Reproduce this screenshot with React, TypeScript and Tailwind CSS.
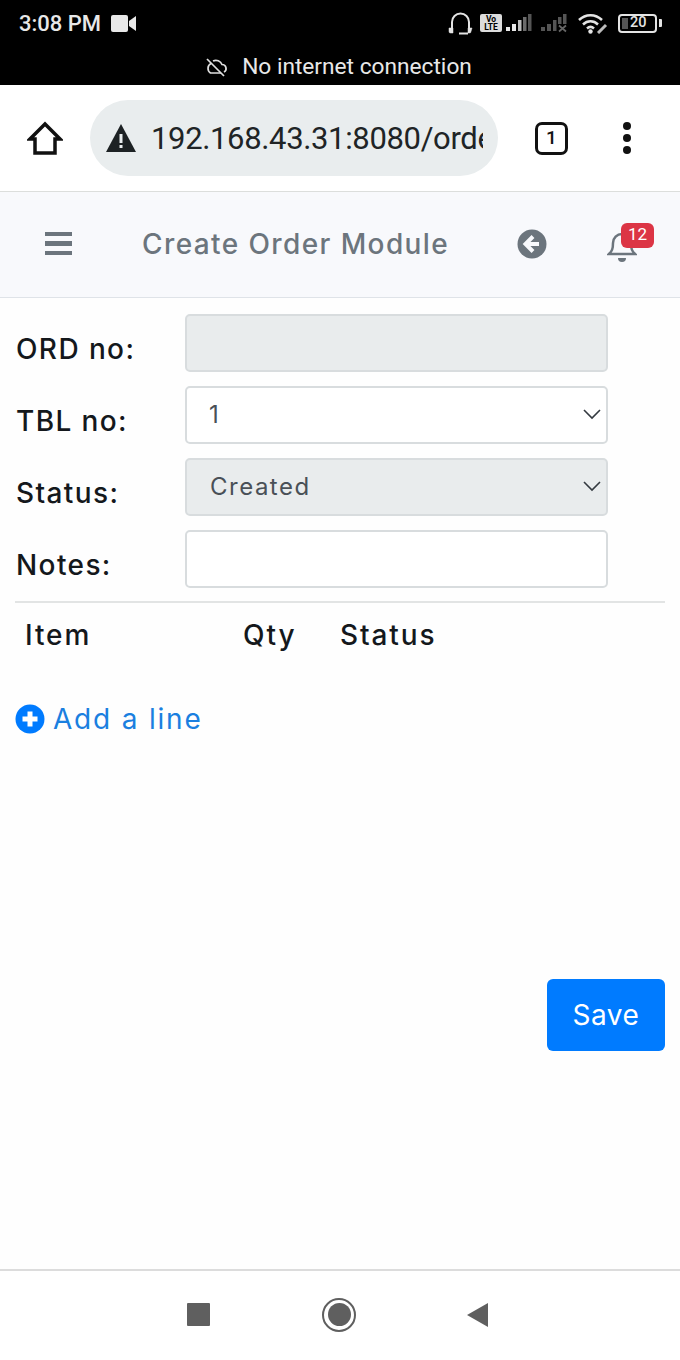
import { useState } from "react";

const sans = "font-['Inter','Liberation_Sans',sans-serif]";

function StatusIcons() {
  return (
    <div className="flex items-center text-[#e4e4e4]">
      {/* headset */}
      <svg width="25" height="23" viewBox="0 0 25 23" fill="none" stroke="currentColor">
        <path d="M4 17V10a8.500 8.500 0 0 1 17 0v7" strokeWidth="2" />
        <path d="M1 16h4v5H2.500A1.500 1.500 0 0 1 1 19.500zM24 16h-4v5h1.500a1.500 1.500 0 0 0 1.500-1.500z" fill="currentColor" strokeWidth="0.500" />
        <path d="M11 21.500h9" strokeWidth="2" />
      </svg>
      <div className="ml-[7px] flex h-[18px] w-[22px] flex-col items-center justify-center rounded-[2px] bg-[#dcdcdc] font-['Roboto',sans-serif] text-[8.500px] leading-[8.500px] font-bold text-black">
        <span>Vo</span>
        <span>LTE</span>
      </div>
      {/* first sim */}
      <svg width="26" height="20" viewBox="0 0 26 20" className="ml-[4px]">
        <rect x="0" y="14" width="4" height="4" fill="#e8e8e8" />
        <rect x="6" y="11" width="4" height="7" fill="#e8e8e8" />
        <rect x="12" y="7" width="3.500" height="11" fill="#bdbdbd" />
        <rect x="17" y="4" width="3.500" height="14" fill="#6b6b6b" />
        <rect x="22" y="1" width="3.500" height="17" fill="#555555" />
      </svg>
      {/* second sim */}
      <svg width="26" height="20" viewBox="0 0 26 20" className="ml-[9px]">
        <rect x="0" y="14" width="4" height="4" fill="#555555" />
        <rect x="6" y="11" width="4" height="7" fill="#555555" />
        <rect x="12" y="7" width="3.500" height="11" fill="#555555" />
        <rect x="17" y="4" width="3.500" height="7" fill="#555555" />
        <rect x="22" y="1" width="3.500" height="10" fill="#555555" />
        <path d="M18 12.500l7 6M25 12.500l-7 6" stroke="#666666" strokeWidth="1.700" />
      </svg>
      {/* wifi */}
      <svg width="30" height="21" viewBox="0 0 30 21" fill="none" stroke="currentColor" strokeWidth="2.500" className="ml-[11px]">
        <path d="M1 7C7.500 .5 17.500 .5 24 7" />
        <path d="M5 11.500c4.500-4.200 10.500-4.200 15 0" />
        <path d="M9 15.500c2.200-2 4.800-2 7 0" />
        <circle cx="12.500" cy="18.500" r="2.200" fill="currentColor" stroke="none" />
        <path d="M20 20l8-8" strokeWidth="3" stroke="#bdbdbd" />
      </svg>
      {/* battery */}
      <div className="ml-[10px] flex h-[19px] w-[39px] items-center rounded-[4px] border-2 border-[#e4e4e4] pl-[2px] font-['Roboto',sans-serif] text-[14.500px] leading-none font-medium">
        <span className="h-[11px] w-[6px] bg-[#555555]" />
        <span className="ml-[2px]">20</span>
      </div>
      <div className="ml-[2px] h-[8px] w-[3px] rounded-r-[1px] bg-[#e4e4e4]" />
    </div>
  );
}

function Chevron() {
  return (
    <svg width="18" height="11" viewBox="0 0 18 11" fill="none" stroke="#343a40" strokeWidth="1.600" className="pointer-events-none absolute top-[23px] right-[7px]">
      <path d="M1 1l8 8 8-8" />
    </svg>
  );
}

function FormRow({ label, children }: { label: string; children: React.ReactNode }) {
  return (
    <div className="flex h-[58px] items-stretch">
      <label className="flex w-[170px] items-center pt-[12px] pl-[1px] text-[28px] leading-none font-medium tracking-[1.400px] text-[#14181c]">
        {label}
      </label>
      <div className="relative w-[423px]">{children}</div>
    </div>
  );
}

export default function App() {
  const [tbl, setTbl] = useState("1");
  const [notes, setNotes] = useState("");

  return (
    <div className={`flex h-[1360px] w-[680px] flex-col overflow-hidden bg-[#fefefe] ${sans}`}>
      {/* android status bar */}
      <div className="h-[85px] shrink-0 bg-black font-['Roboto',sans-serif] text-[#e8e8e8]">
        <div className="flex h-[46px] items-center justify-between pr-[18px] pl-[19px]">
          <div className="flex items-center">
            <span className="text-[22px] font-medium">3:08 PM</span>
            <svg width="25" height="17" viewBox="0 0 25 17" className="ml-[10px]" fill="#e8e8e8">
              <rect x="0" y="0" width="17" height="17" rx="2" />
              <path d="M18 6l7-5v15l-7-5z" />
            </svg>
          </div>
          <StatusIcons />
        </div>
        <div className="flex h-[39px] items-center justify-center pt-[3px]">
          <svg width="24" height="20" viewBox="0 0 24 20" fill="none" stroke="#e0e0e0" strokeWidth="1.700" className="-ml-[4px]">
            <path d="M7 6.500A5.500 5.500 0 0 0 6.500 16H17M20 15a4 4 0 0 0-2-7.500A6.500 6.500 0 0 0 9 4" />
            <path d="M3 2l17 17" />
          </svg>
          <span className="ml-[14px] text-[22.700px]">No internet connection</span>
        </div>
      </div>

      {/* browser toolbar */}
      <div className="flex h-[107px] shrink-0 items-center border-b border-[#dcdedc] bg-white">
        <svg width="36" height="36" viewBox="0 0 36 36" fill="none" stroke="#111111" strokeWidth="3.500" className="ml-[27px]">
          <path d="M18 4L3 19h5v14h20V19h5z" />
        </svg>
        <div className="ml-[27px] flex h-[76px] w-[408px] items-center overflow-hidden rounded-full bg-[#e9edee] pl-[15px]">
          <svg width="32" height="30" viewBox="0 0 32 30" className="shrink-0">
            <path d="M16 1L31 29H1z" fill="#1d2224" />
            <rect x="14.500" y="11" width="3" height="9" fill="#e9edee" />
            <rect x="14.500" y="22" width="3" height="3" fill="#e9edee" />
          </svg>
          <div className="ml-[14px] w-[332px] overflow-hidden font-['Roboto',sans-serif] text-[31px] leading-none tracking-[-0.350px] whitespace-nowrap text-[#202426]">
            192.168.43.31:8080/order
          </div>
        </div>
        <div className="ml-[37px] flex h-[33px] w-[33px] items-center justify-center rounded-[7px] border-[3px] border-[#111111] font-['Roboto',sans-serif] text-[19px] font-medium text-[#111111]">
          1
        </div>
        <div className="ml-[55px] flex flex-col gap-[4px]">
          <span className="h-[8px] w-[8px] rounded-full bg-[#111111]" />
          <span className="h-[8px] w-[8px] rounded-full bg-[#111111]" />
          <span className="h-[8px] w-[8px] rounded-full bg-[#111111]" />
        </div>
      </div>

      {/* navbar */}
      <div className="flex h-[106px] shrink-0 items-center border-b border-[#dfe3e8] bg-[#f8f9fc] pb-[2px]">
        <div className="ml-[45px] flex w-[27px] flex-col gap-[5px]">
          <span className="h-[4.500px] bg-[#6c757d]" />
          <span className="h-[4.500px] bg-[#6c757d]" />
          <span className="h-[4.500px] bg-[#6c757d]" />
        </div>
        <h1 className="ml-[70px] w-[375px] text-[28px] leading-none font-medium tracking-[1.400px] whitespace-nowrap text-[#6c757d]">
          Create Order Module
        </h1>
        <svg width="30" height="30" viewBox="0 0 30 30">
          <circle cx="15" cy="15" r="14.500" fill="#6c757d" />
          <path d="M16 7.500L8.500 15l7.500 7.500M9 15h13" fill="none" stroke="#f8f9fc" strokeWidth="4" />
        </svg>
        <div className="relative ml-[60px] h-[30px] w-[30px]">
          <svg width="30" height="34" viewBox="0 0 30 34" fill="none" stroke="#6c757d" strokeWidth="2.500">
            <path d="M2 25c3-3 4-5 4-11 0-5 4-9 9-9s9 4 9 9c0 6 1 8 4 11z" />
            <path d="M11 29a4 4 0 0 0 8 0z" fill="#6c757d" stroke="none" />
          </svg>
          <span className="absolute -top-[6px] left-[14px] flex h-[25px] w-[33px] items-center justify-center rounded-[6px] bg-[#dc3545] font-['Roboto',sans-serif] text-[17px] text-white">
            12
          </span>
        </div>
      </div>

      {/* form */}
      <div className="flex flex-1 flex-col px-[15px] pt-[16px]">
        <div className="flex flex-col gap-[14px]">
          <FormRow label="ORD no:">
            <input disabled className="h-full w-full rounded-[5px] border-2 border-[#d8dcde] bg-[#e9eced]" />
          </FormRow>
          <FormRow label="TBL no:">
            <select
              value={tbl}
              onChange={(e) => setTbl(e.target.value)}
              className="h-full w-full appearance-none rounded-[5px] border-2 border-[#d8dcde] bg-white px-[22px] text-[24px] text-[#495057]"
            >
              <option value="1">1</option>
              <option value="2">2</option>
            </select>
            <Chevron />
          </FormRow>
          <FormRow label="Status:">
            <select
              disabled
              className="h-full w-full appearance-none rounded-[5px] border-2 border-[#d8dcde] bg-[#e9eced] px-[23px] text-[24px] tracking-[1.500px] text-[#495057] opacity-100"
            >
              <option>Created</option>
            </select>
            <Chevron />
          </FormRow>
          <FormRow label="Notes:">
            <input
              value={notes}
              onChange={(e) => setNotes(e.target.value)}
              className="h-full w-full rounded-[5px] border-2 border-[#d8dcde] bg-white px-[22px] text-[24px]"
            />
          </FormRow>
        </div>

        <div className="mt-[13px] h-[2px] bg-[#e2e4e4]" />

        <div className="flex h-[66px] items-center pb-[3px] text-[28px] leading-none font-medium tracking-[1.900px] text-[#14181c]">
          <span className="ml-[10px] w-[218px]">Item</span>
          <span className="w-[97px]">Qty</span>
          <span>Status</span>
        </div>

        <div className="mt-[34px] flex h-[32px] items-center text-[28px] leading-none tracking-[1.800px] text-[#1a7fe0]">
          <svg width="30" height="30" viewBox="0 0 30 30">
            <circle cx="15" cy="15" r="14.500" fill="#007bff" />
            <path d="M15 7.500v15M7.500 15h15" stroke="#ffffff" strokeWidth="5" />
          </svg>
          <span className="ml-[8px]">Add a line</span>
        </div>

        <div className="mt-[244px] flex justify-end">
          <button className="h-[72px] w-[118px] rounded-[6px] bg-[#007bff] text-[28px] tracking-[0.500px] text-white">Save</button>
        </div>
      </div>

      {/* android nav bar */}
      <div className="flex h-[91px] shrink-0 items-center border-t-2 border-[#dcdcdc] bg-white pb-[2px]">
        <span className="ml-[187px] h-[23px] w-[23px] rounded-[1px] bg-[#5f5f5f]" />
        <div className="ml-[112px] flex h-[34px] w-[34px] items-center justify-center rounded-full border-[2.500px] border-[#5f5f5f]">
          <span className="h-[23px] w-[23px] rounded-full bg-[#5f5f5f]" />
        </div>
        <svg width="24" height="26" viewBox="0 0 24 26" className="ml-[110px]">
          <path d="M22 1v24L1 13z" fill="#5f5f5f" />
        </svg>
      </div>
    </div>
  );
}
